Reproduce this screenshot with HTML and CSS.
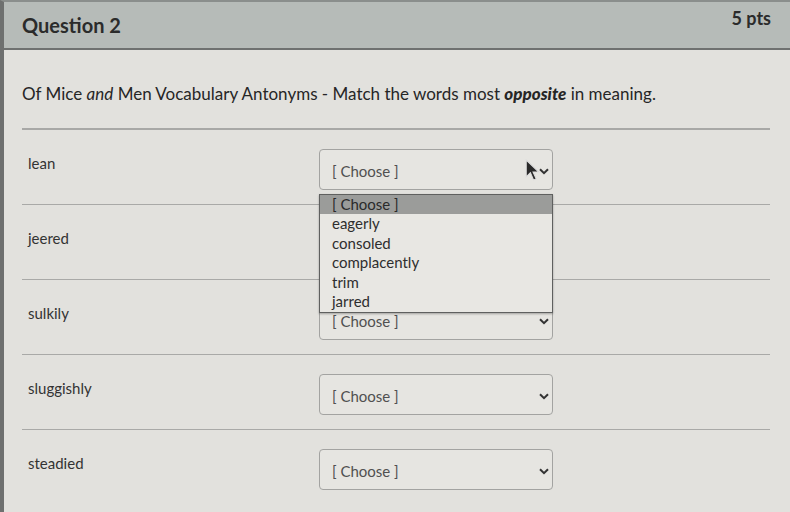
FILE: index.html
```html
<!DOCTYPE html>
<html>
<head>
<meta charset="utf-8">
<link rel="stylesheet" href="styles.css">
</head>
<body>
<div class="question">
  <div class="header">
    <span class="title">Question 2</span>
    <span class="pts">5 pts</span>
  </div>
  <div class="content">
    <p class="text">Of Mice <i>and</i> Men Vocabulary Antonyms - Match the words most <b><i>opposite</i></b> in meaning.</p>
    <div class="rows">
      <div class="row">
        <div class="label">lean</div>
        <div class="select-wrap">
          <div class="select"><span>[ Choose ]</span><svg class="chev" viewBox="0 0 10 7"><path d="M1 1.2 L5 5.2 L9 1.2" fill="none" stroke="#333" stroke-width="2"/></svg></div>
          <svg class="cursor" viewBox="0 0 14 22"><path d="M1 1 L1 17 L5 13 L8 20 L10.5 19 L7.5 12.5 L13 12.5 Z" fill="#2a2a2a" stroke="#ddd" stroke-width="1"/></svg>
          <ul class="menu">
            <li class="active">[ Choose ]</li>
            <li>eagerly</li>
            <li>consoled</li>
            <li>complacently</li>
            <li>trim</li>
            <li>jarred</li>
          </ul>
        </div>
      </div>
      <div class="row">
        <div class="label">jeered</div>
        <div class="select-wrap">
          <div class="select covered"><span>[ Choose ]</span><svg class="chev" viewBox="0 0 10 7"><path d="M1 1.2 L5 5.2 L9 1.2" fill="none" stroke="#333" stroke-width="2"/></svg></div>
        </div>
      </div>
      <div class="row">
        <div class="label">sulkily</div>
        <div class="select-wrap">
          <div class="select"><span>[ Choose ]</span><svg class="chev" viewBox="0 0 10 7"><path d="M1 1.2 L5 5.2 L9 1.2" fill="none" stroke="#333" stroke-width="2"/></svg></div>
        </div>
      </div>
      <div class="row">
        <div class="label">sluggishly</div>
        <div class="select-wrap">
          <div class="select"><span>[ Choose ]</span><svg class="chev" viewBox="0 0 10 7"><path d="M1 1.2 L5 5.2 L9 1.2" fill="none" stroke="#333" stroke-width="2"/></svg></div>
        </div>
      </div>
      <div class="row last">
        <div class="label">steadied</div>
        <div class="select-wrap">
          <div class="select"><span>[ Choose ]</span><svg class="chev" viewBox="0 0 10 7"><path d="M1 1.2 L5 5.2 L9 1.2" fill="none" stroke="#333" stroke-width="2"/></svg></div>
        </div>
      </div>
    </div>
  </div>
</div>
</body>
</html>
```
FILE: styles.css
```css
html, body {
  margin: 0;
  padding: 0;
  background: #e2e1dd;
  font-family: Lato, "Open Sans", sans-serif;
  color: #363636;
}
.question {
  width: 790px;
  height: 512px;
  box-sizing: border-box;
  border-left: 4px solid #6e706f;
  border-top: 2px solid #8a8e8c;
  overflow: hidden;
}
.header {
  height: 46px;
  background: #b6bbb8;
  border-bottom: 2px solid #6f7170;
  display: flex;
  justify-content: space-between;
  align-items: flex-start;
  padding: 0 19px 0 18px;
}
.title {
  font-weight: 700;
  font-size: 20px;
  margin-top: 11px;
  color: #2b2b2b;
}
.pts {
  font-weight: 700;
  font-size: 18px;
  margin-top: 5px;
  color: #2b2b2b;
}
.content {
  padding: 34px 20px 0 18px;
}
.text {
  margin: 0;
  font-size: 17px;
  line-height: 20px;
  color: #262626;
  padding-bottom: 24px;
  border-bottom: 2px solid #a8a8a6;
}
.text b { font-weight: 900; }
.rows {
  display: flex;
  flex-direction: column;
}
.row {
  display: grid;
  grid-template-columns: 297px 234px;
  padding: 19px 0 14px;
  border-bottom: 1px solid #a9a9a7;
}
.row.last { border-bottom: none; }
.label {
  padding: 6px 0 0 6px;
  font-size: 15px;
  line-height: 16px;
  color: #333;
}
.select-wrap {
  position: relative;
}
.select {
  height: 41px;
  box-sizing: border-box;
  border: 1px solid #a3a3a1;
  border-radius: 4px;
  background: #e6e5e1;
  display: flex;
  align-items: center;
  justify-content: space-between;
  padding: 3px 3px 0 12px;
  font-size: 15px;
  color: #505050;
}
.select.covered { visibility: hidden; }
.chev {
  width: 10px;
  height: 7px;
}
.cursor {
  position: absolute;
  left: 206px;
  top: 10px;
  width: 15px;
  height: 23px;
}
.menu {
  position: absolute;
  left: 0;
  top: 45px;
  width: 234px;
  box-sizing: border-box;
  margin: 0;
  padding: 0 0 1px;
  list-style: none;
  background: #e8e7e3;
  border: 1px solid #5f605f;
  box-shadow: 0 1px 2px rgba(0,0,0,0.3);
  z-index: 2;
}
.menu li {
  height: 19.4px;
  line-height: 19.4px;
  padding-left: 12px;
  font-size: 15px;
  color: #2e2e2e;
}
.menu li.active {
  background: #9b9c9a;
  color: #2a2a2a;
}
```
